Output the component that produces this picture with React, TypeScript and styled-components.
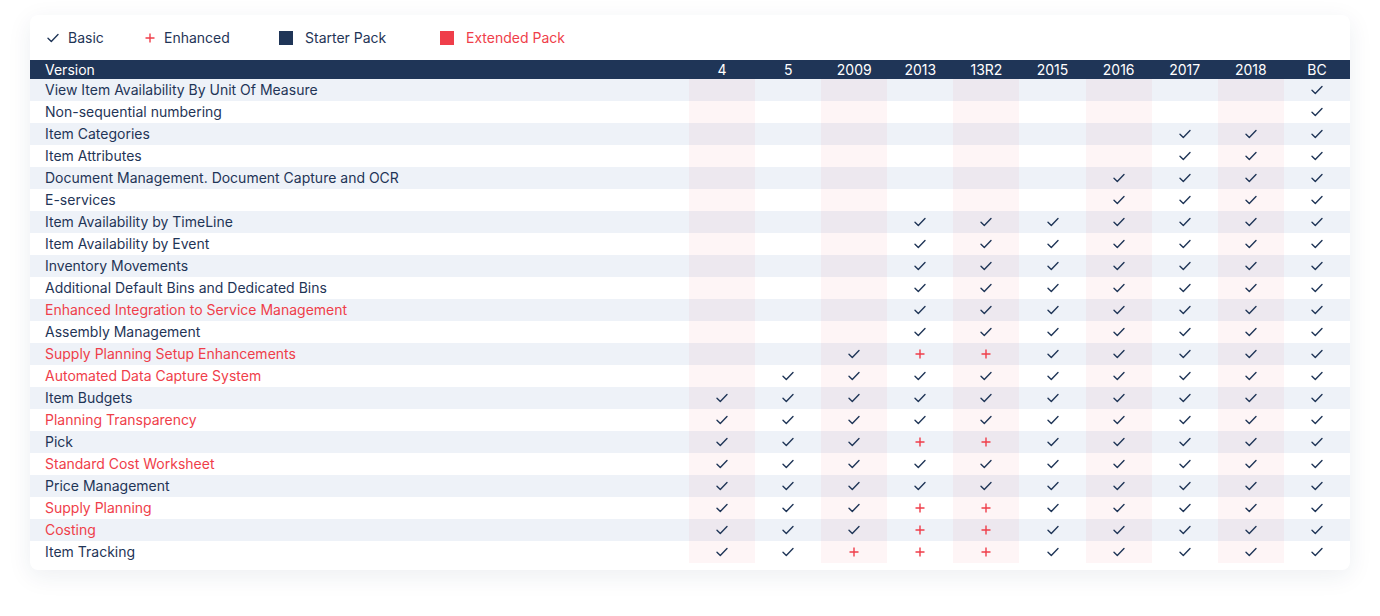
import * as React from "react";
import styled, { createGlobalStyle } from "styled-components";

const NAVY = "#1f3557";
const RED = "#ef3e4a";

const versions = ["4", "5", "2009", "2013", "13R2", "2015", "2016", "2017", "2018", "BC"];

// each mark string: one char per version column ('.' none, 'v' check, '+' enhanced)
const rows: { name: string; ext?: boolean; marks: string }[] = [
  { name: "View Item Availability By Unit Of Measure", marks: ".........v" },
  { name: "Non-sequential numbering", marks: ".........v" },
  { name: "Item Categories", marks: ".......vvv" },
  { name: "Item Attributes", marks: ".......vvv" },
  { name: "Document Management. Document Capture and OCR", marks: "......vvvv" },
  { name: "E-services", marks: "......vvvv" },
  { name: "Item Availability by TimeLine", marks: "...vvvvvvv" },
  { name: "Item Availability by Event", marks: "...vvvvvvv" },
  { name: "Inventory Movements", marks: "...vvvvvvv" },
  { name: "Additional Default Bins and Dedicated Bins", marks: "...vvvvvvv" },
  { name: "Enhanced Integration to Service Management", ext: true, marks: "...vvvvvvv" },
  { name: "Assembly Management", marks: "...vvvvvvv" },
  { name: "Supply Planning Setup Enhancements", ext: true, marks: "..v++vvvvv" },
  { name: "Automated Data Capture System", ext: true, marks: ".vvvvvvvvv" },
  { name: "Item Budgets", marks: "vvvvvvvvvv" },
  { name: "Planning Transparency", ext: true, marks: "vvvvvvvvvv" },
  { name: "Pick", marks: "vvv++vvvvv" },
  { name: "Standard Cost Worksheet", ext: true, marks: "vvvvvvvvvv" },
  { name: "Price Management", marks: "vvvvvvvvvv" },
  { name: "Supply Planning", ext: true, marks: "vvv++vvvvv" },
  { name: "Costing", ext: true, marks: "vvv++vvvvv" },
  { name: "Item Tracking", marks: "vv+++vvvvv" },
];

const Check = () => (
  <svg width="12" height="10" viewBox="0 0 12 10">
    <path d="M1 5.2 L4.3 8.4 L11 1.6" fill="none" stroke={NAVY} strokeWidth="1.4" strokeLinecap="round" strokeLinejoin="round" />
  </svg>
);

const Plus = () => (
  <svg width="10" height="10" viewBox="0 0 10 10">
    <path d="M5 0.5 V9.5 M0.5 5 H9.5" stroke={RED} strokeWidth="1.4" />
  </svg>
);

const App: React.FC = () => (
  <>
    <GlobalStyle />
    <Page>
      <Card>
        <Legend>
          <LegendItem $w={98}>
            <Check />
            Basic
          </LegendItem>
          <LegendItem $w={134}>
            <Plus />
            Enhanced
          </LegendItem>
          <LegendItem $w={161}>
            <Swatch $color={NAVY} />
            Starter Pack
          </LegendItem>
          <LegendItem $red>
            <Swatch $color={RED} />
            Extended Pack
          </LegendItem>
        </Legend>
        <Table>
          <HeadRow>
            <HeadLabel>Version</HeadLabel>
            {versions.map((v) => (
              <HeadCell key={v}>{v}</HeadCell>
            ))}
          </HeadRow>
          {rows.map((r, i) => (
            <Row key={r.name} $striped={i % 2 === 0}>
              <Label $red={r.ext}>{r.name}</Label>
              {r.marks.split("").map((m, j) => (
                <Cell key={j} $tint={j % 2 === 0 && j < 9}>
                  {m === "v" && <Check />}
                  {m === "+" && <Plus />}
                </Cell>
              ))}
            </Row>
          ))}
        </Table>
      </Card>
    </Page>
  </>
);

export default App;

const GlobalStyle = createGlobalStyle`
  body {
    margin: 0;
    background: #fff;
    font-family: Inter, "Liberation Sans", sans-serif;
  }
`;

const Page = styled.div`
  padding: 15px 30px 40px;
`;

const Card = styled.div`
  width: 1320px;
  background: #fff;
  border-radius: 8px;
  box-shadow: 0 6px 24px rgba(31, 53, 87, 0.08);
  padding-bottom: 7px;
  overflow: hidden;
`;

const Legend = styled.div`
  display: flex;
  align-items: center;
  height: 45px;
  padding-left: 17px;
  font-size: 14px;
  color: ${NAVY};
`;

const LegendItem = styled.div<{ $w?: number; $red?: boolean }>`
  display: flex;
  align-items: center;
  gap: 9px;
  width: ${(p) => (p.$w ? `${p.$w}px` : "auto")};
  color: ${(p) => (p.$red ? RED : NAVY)};
`;

const Swatch = styled.span<{ $color: string }>`
  width: 14px;
  height: 14px;
  background: ${(p) => p.$color};
  margin-right: 3px;
`;

const Table = styled.div`
  display: flex;
  flex-direction: column;
`;

const HeadRow = styled.div`
  display: grid;
  grid-template-columns: 659px repeat(10, 1fr);
  height: 19px;
  background: ${NAVY};
  color: #fff;
  font-size: 14px;
  line-height: 19px;
`;

const HeadLabel = styled.div`
  padding-left: 15px;
`;

const HeadCell = styled.div`
  text-align: center;
`;

const Row = styled.div<{ $striped: boolean }>`
  display: grid;
  grid-template-columns: 659px repeat(10, 1fr);
  height: 22px;
  background: ${(p) => (p.$striped ? "#eef2f8" : "#fff")};
`;

const Label = styled.div<{ $red?: boolean }>`
  padding-left: 15px;
  font-size: 14px;
  line-height: 22px;
  color: ${(p) => (p.$red ? RED : NAVY)};
`;

const Cell = styled.div<{ $tint: boolean }>`
  display: flex;
  align-items: center;
  justify-content: center;
  background: ${(p) => (p.$tint ? "rgba(245, 70, 90, 0.055)" : "transparent")};
`;
